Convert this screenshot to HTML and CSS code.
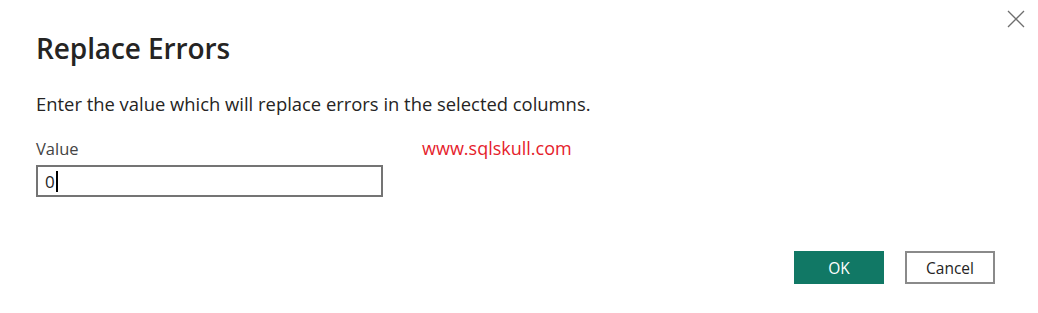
FILE: index.html
```html
<!DOCTYPE html>
<html>
<head>
<meta charset="utf-8">
<link rel="stylesheet" href="styles.css">
</head>
<body>
<div class="dialog">
  <button class="close" aria-label="Close">
    <svg width="18" height="18" viewBox="0 0 18 18"><path d="M1 1L17 17M17 1L1 17" stroke="#6e6e6e" stroke-width="1.3" fill="none"/></svg>
  </button>
  <h1 class="title">Replace Errors</h1>
  <p class="desc">Enter the value which will replace errors in the selected columns.</p>
  <div class="field-row">
    <div class="field">
      <label class="label">Value</label>
      <div class="input"><span class="val">0</span><span class="caret"></span></div>
    </div>
    <div class="watermark">www.sqlskull.com</div>
  </div>
  <div class="actions">
    <button class="btn primary">OK</button>
    <button class="btn secondary">Cancel</button>
  </div>
</div>
</body>
</html>
```
FILE: styles.css
```css
* { box-sizing: border-box; }
html, body { margin: 0; padding: 0; background: #ffffff; }
body { font-family: "Open Sans", "Noto Sans", sans-serif; color: #252423; }
.dialog { position: relative; width: 1038px; height: 313px; padding: 28px 43px 0 36px; }
.close { position: absolute; top: 10px; right: 13px; width: 18px; height: 18px; padding: 0; border: 0; background: none; }
.close svg { display: block; }
.title { margin: 0; font-size: 28px; font-weight: 600; line-height: 40px; color: #252423; letter-spacing: -0.1px; }
.desc { margin: 24px 0 0; font-size: 18.4px; line-height: 24px; color: #252423; }
.field-row { display: flex; align-items: flex-start; margin-top: 22px; }
.field { display: flex; flex-direction: column; width: 347px; }
.label { font-size: 16.5px; line-height: 22px; color: #444; }
.input { margin-top: 5px; height: 32px; border: 2px solid #747474; display: flex; align-items: center; padding-left: 7px; font-size: 17px; color: #252423; }
.caret { display: inline-block; width: 2px; height: 21px; background: #000; margin-left: 1px; }
.watermark { margin-left: 39px; color: #e5222b; font-size: 18px; line-height: 24px; margin-top: -2px; }
.actions { display: flex; justify-content: flex-end; gap: 21px; margin-top: 54px; }
.btn { width: 90px; height: 33px; font-family: inherit; font-size: 15.5px; padding: 0; }
.primary { background: #117865; color: #fff; border: 0; }
.secondary { background: #fff; color: #252423; border: 2px solid #8a8a8a; }
```
